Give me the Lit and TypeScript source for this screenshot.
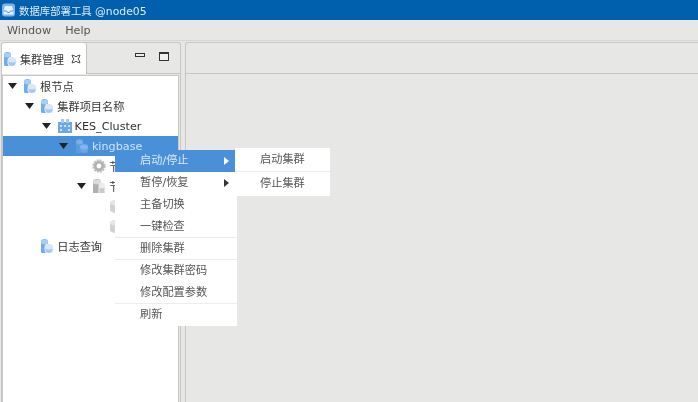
import { LitElement, html, css, svg } from "lit";
import { customElement } from "lit/decorators.js";

const cyl = (x: number, y: number, w: number, h: number, c: string, e: string, s = "none") => svg`
  <path d="M${x} ${y + 3}a${w / 2} 3 0 0 1 ${w} 0v${h}a${w / 2} 3 0 0 1 -${w} 0z" fill="${c}" stroke="${s}" stroke-width=".8"/>
  <ellipse cx="${x + w / 2}" cy="${y + 3}" rx="${w / 2}" ry="2.500" fill="${e}"/>`;

const db = (dim = false) => {
  const a = dim ? "#5a9ce2" : "#6dadec";
  const b = dim ? "#78afe8" : "#a6cdf4";
  const c = dim ? "#6aa6e6" : "#a3c9f2";
  const d = dim ? "#84b6ea" : "#d8e8fa";
  return html`<svg class="ic" viewBox="0 0 14 14">${cyl(1, 0, 7, 9, a, b)}${cyl(5, 5, 8, 3.5, c, d, dim ? "#5a9ce2" : "#fff")}</svg>`;
};
const cluster = html`<svg class="ic" viewBox="0 0 14 14"><path d="M0 3h14v11H0z" fill="#6fa8ea"/><path d="M3 0h3v4H3zM8 0h3v4H8z" fill="#a3caf2"/><path d="M2 6h2v2H2zM6 6h2v2H6zM10 6h2v2h-2zM2 10h2v2H2zM10 10h2v2h-2z" fill="#cfe1f6"/></svg>`;
const gear = html`<svg class="ic" viewBox="0 0 14 14"><circle cx="7" cy="7" r="3.800" fill="none" stroke="#b0b0b0" stroke-width="2.800"/><circle cx="7" cy="7" r="5.800" fill="none" stroke="#bcbcbc" stroke-width="1.800" stroke-dasharray="2 1.030"/></svg>`;
const grayDb = html`<svg class="ic" viewBox="0 0 14 14">${cyl(1, 0, 8, 10, "#b0b0b0", "#dcdcdc")}${cyl(7, 4, 6, 6.5, "#cacaca", "#ececec", "#fff")}</svg>`;
const grayDisk = html`<svg class="ic" viewBox="0 0 14 14">${cyl(0, 1, 12, 7, "#d2d2d2", "#e6e6e6")}</svg>`;

type Node = { d: number; t?: boolean; i: unknown; l: string; sel?: boolean };
const nodes: Node[] = [
  { d: 0, t: true, i: db(), l: "根节点" },
  { d: 1, t: true, i: db(), l: "集群项目名称" },
  { d: 2, t: true, i: cluster, l: "KES_Cluster" },
  { d: 3, t: true, i: db(true), l: "kingbase", sel: true },
  { d: 4, i: gear, l: "节" },
  { d: 4, t: true, i: grayDb, l: "节" },
  { d: 5, i: grayDisk, l: "" },
  { d: 5, i: grayDisk, l: "" },
  { d: 1, i: db(), l: "日志查询" },
];

@customElement("app-root")
export class AppRoot extends LitElement {
  static styles = css`
    :host { display: block; width: 698px; height: 402px; position: relative; overflow: hidden; background: #e7e7e5;
      font-family: "DejaVu Sans", "Noto Sans CJK SC", sans-serif; font-size: 11.2px; color: #3a3a3a; filter: blur(0.5px); }
    .title { height: 20px; background: #0060ad; color: #dfebf7; display: flex; align-items: center; gap: 4px; padding-left: 2px; font-size: 10.4px; }
    .title svg { width: 13px; height: 14px; flex: none; }
    .title b { font-weight: 400; font-size: 10.800px; }
    .menubar { height: 21px; display: flex; align-items: center; gap: 14px; padding-left: 7px; font-size: 11.2px; color: #555; border-bottom: 1px solid #d6d6d4; box-sizing: border-box; }
    .body { display: flex; height: 361px; padding-left: 1px; gap: 4px; }
    .left { width: 180px; height: 360px; border: 1px solid #c6c6c4; border-bottom: 0; border-radius: 3px 3px 0 0; box-sizing: border-box; margin-top: 1px; display: flex; flex-direction: column; }
    .head { height: 31px; display: flex; flex: none; border-bottom: 1px solid #c6c6c4; box-sizing: border-box; }
    .tab { width: 85px; height: 31px; background: #fff; border-right: 1px solid #c0c0be; display: flex; align-items: center; padding-left: 1px; box-sizing: border-box; color: #333; font-size: 11px; border-radius: 3px 3px 0 0; white-space: nowrap; }
    .tab .ic { margin-right: 3px; }
    .tab .x { width: 10px; height: 10px; margin-left: 7px; flex: none; }
    .ctrls { display: flex; gap: 14px; align-items: center; margin-left: 48px; height: 26px; }
    .min { width: 8px; height: 2px; border: 1px solid #333; background: #eee; margin-bottom: 3px; }
    .max { width: 8px; height: 6px; border: 1px solid #333; border-top-width: 2px; background: #f0f0f0; }
    .tree { flex: 1; background: #fff; margin: 1px 1px 0 0; border: 1px solid #c8c8c6; border-bottom: 0; }
    .row { height: 20px; display: flex; align-items: center; color: #333; font-size: 11.2px; white-space: nowrap; }
    .row.sel { background: #4a90d9; color: #cfe2f6; }
    .tw { width: 11px; height: 6px; flex: none; display: flex; justify-content: center; margin-right: 5.500px; }
    .tw svg { width: 9px; height: 6px; display: block; }
    .ic { width: 14px; height: 14px; flex: none; margin-right: 3px; display: block; }
    .right { flex: 1; height: 360px; margin-top: 1px; border: 1px solid #c6c6c4; border-right: 0; border-bottom: 0; box-sizing: border-box; border-radius: 3px 0 0 0; }
    .rhead { height: 31px; border-bottom: 1px solid #c6c6c4; box-sizing: border-box; }
    .menu { position: absolute; background: #fff; color: #555; font-size: 11.2px; }
    .m1 { left: 115px; top: 150px; width: 122px; }
    .m2 { left: 235px; top: 148px; width: 95px; }
    .item { height: 22px; line-height: 22px; padding-left: 25px; position: relative; box-sizing: border-box; }
    .item.hi { background: #4a90d9; color: #dce9f8; margin-right: 2px; }
    .sep { height: 1px; background: #ececec; margin-top: -1px; position: relative; }
    .arrow { position: absolute; right: 8px; top: 7px; width: 0; height: 0; border-left: 5px solid #333; border-top: 4px solid transparent; border-bottom: 4px solid transparent; }
    .hi .arrow { border-left-color: #fff; right: 6px; }
    .m2 .item { height: 24px; line-height: 24px; }
  `;

  render() {
    return html`
      <div class="title">
        <svg viewBox="0 0 13 14"><rect x="0" y="0.5" width="13" height="13" rx="3" fill="#7fb2ee"/><path d="M3 3h7l1.500 5v3.500h-10V8z" fill="#e8f1fb"/><path d="M1.500 8h3l1 1.500h2l1-1.500h3" fill="none" stroke="#5b93d6"/></svg>
        <span>数据库部署工具 <b>@node05</b></span>
      </div>
      <div class="menubar"><span>Window</span><span>Help</span></div>
      <div class="body">
        <div class="left">
          <div class="head">
            <div class="tab">${db()}<span>集群管理</span>
              <svg class="x" viewBox="0 0 10 10"><path d="M1 1l3 1 1 1 1-1 3-1-1 3-1 1 1 1 1 3-3-1-1-1-1 1-3 1 1-3 1-1-1-1z" fill="#f4f4f4" stroke="#444" stroke-width=".9"/></svg>
            </div>
            <div class="ctrls"><div class="min"></div><div class="max"></div></div>
          </div>
          <div class="tree">
            ${nodes.map((n) => html`<div class="row ${n.sel ? "sel" : ""}" style="padding-left:${3.5 + n.d * 17.3}px">
              <span class="tw">${n.t ? html`<svg viewBox="0 0 9 6"><path d="M0 0h9L4.500 6z" fill="#222"/></svg>` : ""}</span>
              ${n.i}${n.l ? html`<span>${n.l}</span>` : ""}</div>`)}
          </div>
        </div>
        <div class="right"><div class="rhead"></div></div>
      </div>
      <div class="menu m1">
        <div class="item hi">启动/停止<i class="arrow"></i></div>
        <div class="item">暂停/恢复<i class="arrow"></i></div>
        <div class="item">主备切换</div>
        <div class="item">一键检查</div>
        <div class="sep"></div>
        <div class="item">删除集群</div>
        <div class="sep"></div>
        <div class="item">修改集群密码</div>
        <div class="item">修改配置参数</div>
        <div class="sep"></div>
        <div class="item">刷新</div>
      </div>
      <div class="menu m2">
        <div class="item">启动集群</div>
        <div class="sep"></div>
        <div class="item">停止集群</div>
      </div>
    `;
  }
}
